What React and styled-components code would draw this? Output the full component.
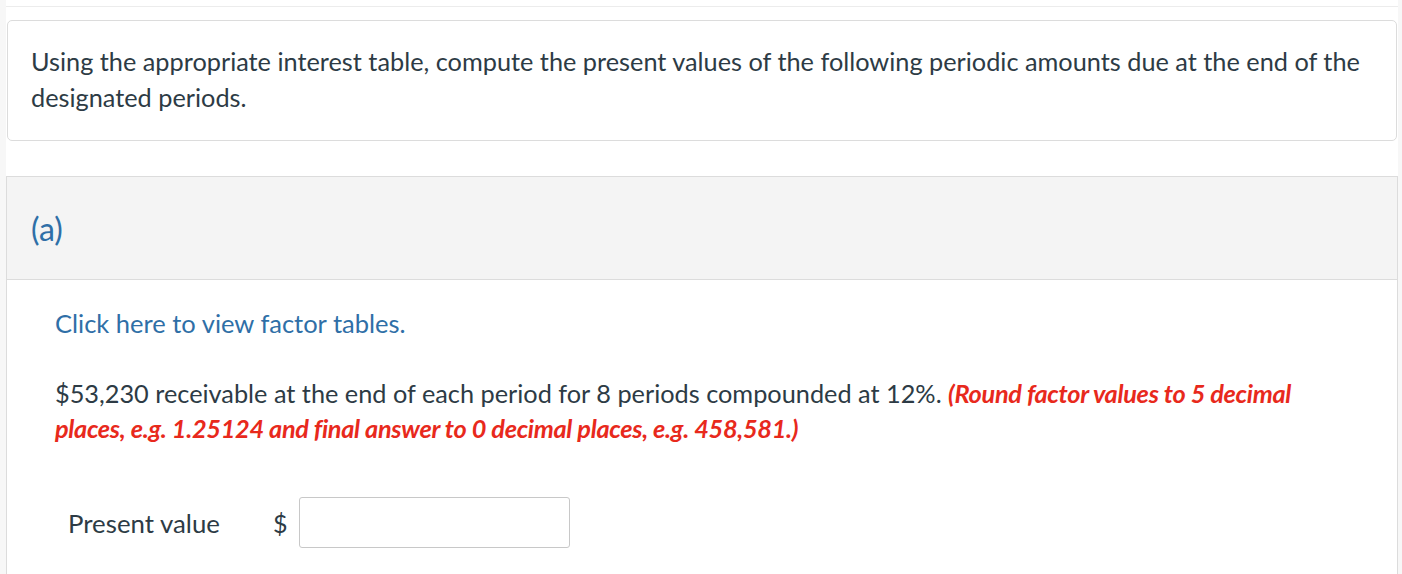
import styled, { createGlobalStyle } from "styled-components"

const Global = createGlobalStyle`
    html, body {
        margin: 0;
        padding: 0;
        background: #f7f7f7;
        font-family: Lato, "Open Sans", sans-serif;
        color: #2d3b45;
    }
`

const Page = styled.div`
    display: flex;
    height: 574px;
    overflow: hidden;
`

const Column = styled.main`
    margin-left: 6px;
    width: 1392px;
    background: #fff;
    display: flex;
    flex-direction: column;
`

const TopRule = styled.div`
    height: 6px;
    border-bottom: 1px solid #ececec;
`

const Card = styled.section`
    margin: 13px 1px 0 1px;
    border: 1px solid #dcdcdc;
    border-radius: 5px;
    height: 121px;
    padding: 22px 23px 0 23px;
    box-sizing: border-box;
    font-size: 25.3px;
    line-height: 36px;
`

const Panel = styled.section`
    margin-top: 35px;
    border: 1px solid #dcdcdc;
    border-bottom: none;
    flex: 1;
`

const PanelHead = styled.div`
    background: #f4f4f4;
    height: 102px;
    border-bottom: 1px solid #dcdcdc;
    display: flex;
    align-items: center;
    padding-left: 24px;
    font-size: 32px;
    color: #2f6fa7;
`

const PanelBody = styled.div`
    padding: 28px 48px 0 48px;
`

const Link = styled.a`
    display: block;
    font-size: 25.5px;
    color: #2f6fa7;
    text-decoration: none;
    cursor: pointer;
`

const Question = styled.p`
    margin: 38px 0 0 0;
    font-size: 25.3px;
    line-height: 35px;
`

const Hint = styled.span`
    color: #e8291c;
    font-weight: bold;
    font-style: italic;
    letter-spacing: -0.3px;
`

const AnswerRow = styled.div`
    display: flex;
    align-items: center;
    margin-top: 51px;
    padding-left: 13px;
`

const Label = styled.span`
    font-size: 25.8px;
    width: 205px;
`

const Currency = styled.span`
    font-size: 25px;
    width: 26px;
`

const Field = styled.input`
    width: 271px;
    height: 51px;
    box-sizing: border-box;
    border: 1px solid #c8c8c8;
    border-radius: 3px;
    font-size: 20px;
    font-family: inherit;
    padding: 0 10px;
`

export default function App() {
    return (
        <Page>
            <Global />
            <Column>
                <TopRule />
                <Card>
                    Using the appropriate interest table, compute the present values of the following periodic amounts due at the end of the designated periods.
                </Card>
                <Panel>
                    <PanelHead>(a)</PanelHead>
                    <PanelBody>
                        <Link>Click here to view factor tables.</Link>
                        <Question>
                            $53,230 receivable at the end of each period for 8 periods compounded at 12%.{" "}
                            <Hint>(Round factor values to 5 decimal places, e.g. 1.25124 and final answer to 0 decimal places, e.g. 458,581.)</Hint>
                        </Question>
                        <AnswerRow>
                            <Label>Present value</Label>
                            <Currency>$</Currency>
                            <Field type="text" />
                        </AnswerRow>
                    </PanelBody>
                </Panel>
            </Column>
        </Page>
    )
}
